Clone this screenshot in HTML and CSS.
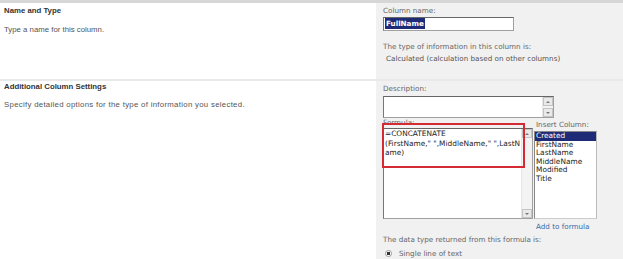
FILE: index.html
```html
<!doctype html>
<html>
 <head>
  <title>Column settings</title>
  <link rel="stylesheet" href="styles.css">
 </head>
 <body>
  <div class="topline"></div>

  <div class="section first">
   <div class="info">
    <div class="head">Name and Type</div>
    <div class="desc">Type a name for this column.</div>
   </div>
   <div class="fields">
    <div class="label">Column name:</div>
    <div class="textbox"><span class="sel">FullName</span></div>
    <div class="label gap">The type of information in this column is:</div>
    <div class="value">Calculated (calculation based on other columns)</div>
   </div>
  </div>

  <div class="sep"></div>

  <div class="section second">
   <div class="info">
    <div class="head">Additional Column Settings</div>
    <div class="desc">Specify detailed options for the type of information you selected.</div>
   </div>
   <div class="fields">
    <div class="label">Description:</div>
    <div class="area small">
     <div class="area-text"></div>
     <div class="scroll"><span class="btn up"></span><span class="btn down"></span></div>
    </div>

    <div class="formula-row">
     <div class="formula-col">
      <div class="label">Formula:</div>
      <div class="area big">
       <div class="area-text">
        <div>=CONCATENATE</div>
        <div>(FirstName," ",MiddleName," ",LastN</div>
        <div>ame)</div>
       </div>
       <div class="scroll"><span class="btn up"></span><span class="btn down"></span></div>
      </div>
      <div class="highlight"></div>
     </div>
     <div class="insert-col">
      <div class="label">Insert Column:</div>
      <div class="listbox">
       <div class="opt chosen">Created</div>
       <div class="opt">FirstName</div>
       <div class="opt">LastName</div>
       <div class="opt">MiddleName</div>
       <div class="opt">Modified</div>
       <div class="opt">Title</div>
      </div>
      <a class="add" href="#">Add to formula</a>
     </div>
    </div>

    <div class="label returned">The data type returned from this formula is:</div>
    <div class="radio-row"><span class="radio"></span>Single line of text</div>
   </div>
  </div>
 </body>
</html>
```

FILE: styles.css
```css
body { margin: 0; font-family: "DejaVu Sans", Verdana, sans-serif; font-size: 7.2px; color: #555; background: #fff; }

.topline { height: 3px; background: #d6d6d6; }

.section { display: flex; }
.section.first { height: 76px; }
.section.second { height: 178px; }
.sep { height: 2px; background: #e9e9e9; }

.info { width: 376px; padding: 3px 4px; box-sizing: border-box; font-family: "Liberation Sans", Tahoma, sans-serif; font-size: 7.8px; line-height: 10px; }
.second .info { padding-top: 1px; }
.info .head { font-weight: bold; color: #333; }
.info .desc { margin-top: 9px; color: #555; }
.second .info .desc { margin-top: 8px; letter-spacing: 0.3px; }

.fields { flex: 1; background: #f1f1f1; padding: 3px 0 0 7px; }

.label { color: #666; line-height: 10px; }
.label.gap { margin-top: 11px; }
.value { margin-left: 3px; margin-top: 2px; line-height: 10px; }

.textbox { width: 128px; height: 12px; border: 1px solid #a0a0a0; border-top-color: #666; border-left-color: #777; background: #fff; margin-top: 1px; line-height: 12px; padding-left: 1px; }
.textbox .sel { background: #1e2c78; color: #fff; font-weight: bold; padding: 1px 1px; }

.area { display: flex; background: #fff; border: 1px solid #a0a0a0; border-top-color: #666; border-left-color: #777; }
.area.small { width: 169px; height: 20px; margin-top: 2px; }
.area.big { width: 148px; height: 89px; }
.area-text { flex: 1; padding: 0 1px; color: #222; line-height: 9.5px; font-size: 7.4px; white-space: nowrap; overflow: hidden; }

.scroll { width: 10px; display: flex; flex-direction: column; justify-content: space-between; background: #f3f3f3; border-left: 1px solid #e6e6e6; }
.btn { height: 9px; background: #e9e9e9; border: 1px solid #c4c4c4; box-sizing: border-box; position: relative; }
.btn::after { content: ""; position: absolute; left: 2px; top: 3px; border-left: 2px solid transparent; border-right: 2px solid transparent; }
.btn.up::after { border-bottom: 2px solid #777; }
.btn.down::after { border-top: 2px solid #777; }

.formula-row { display: flex; gap: 1px; }
.formula-col { position: relative; }
.highlight { position: absolute; left: -1px; top: 5px; width: 139px; height: 41px; border: 2px solid #d42a33; }

.insert-col { padding-top: 2px; }
.insert-col .label { margin-left: 2px; }
.listbox { width: 61px; height: 86px; margin-top: 1px; background: #fff; border: 1px solid #888; border-right-color: #bbb; border-bottom-color: #ccc; color: #222; font-size: 7.4px; }
.opt { line-height: 8.6px; padding-left: 1px; }
.opt.chosen { background: #1e2c78; color: #fff; }

.add { display: block; margin: 3px 0 0 2px; line-height: 10px; color: #3b6aa8; text-decoration: none; }

.label.returned { margin-top: 3px; }
.radio-row { display: flex; align-items: center; height: 10px; margin-top: 3px; color: #666; }
.radio { width: 5px; height: 5px; border-radius: 50%; border: 1px solid #999; background: radial-gradient(circle, #333 40%, #fff 55%); margin: 0 7px 0 2px; }
```
